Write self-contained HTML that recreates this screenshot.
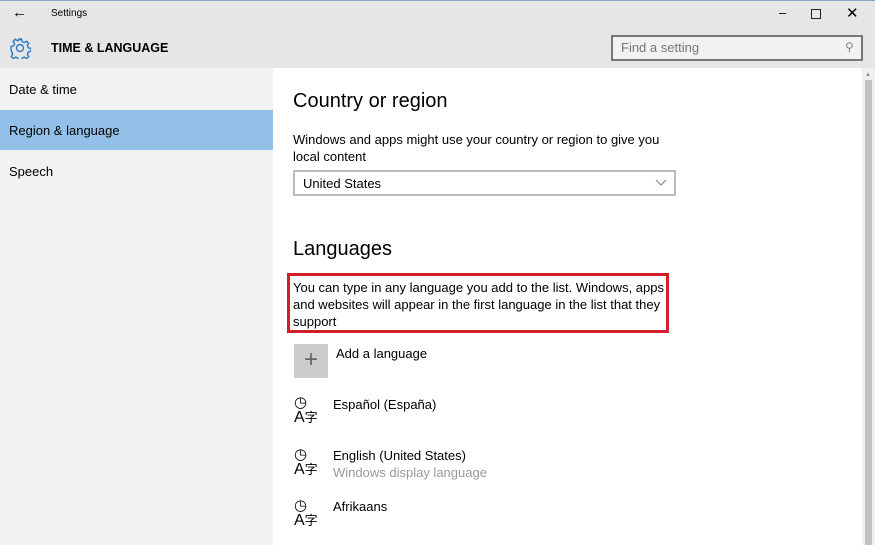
<!DOCTYPE html>
<html><head><style>
*{margin:0;padding:0;box-sizing:border-box}
body{width:875px;height:545px;overflow:hidden;font-family:"Liberation Sans",sans-serif;color:#000;background:#fff;position:relative}
.a{position:absolute;white-space:nowrap}
.t{font-size:13px;letter-spacing:0}
</style></head><body>
<div class="a" style="left:0;top:0;width:875px;height:68px;background:#e6e6e6"></div>
<div class="a" style="left:0;top:0;width:875px;height:1px;background:#8aa6c8"></div>
<div class="a" style="left:12px;top:4px;font-size:15px">&#8592;</div>
<div class="a" style="left:51px;top:8px;font-size:10px">Settings</div>
<div class="a" style="left:779px;top:5px;font-size:13px">&#8211;</div>
<div class="a" style="left:811px;top:9px;width:10px;height:10px;border:1.5px solid #222"></div>
<div class="a" style="left:846px;top:4px;font-size:15px">&#10005;</div>
<svg class="a" style="left:9px;top:37px" width="22" height="22" viewBox="0 0 22 22"><g fill="none" stroke="#2b79c2" stroke-width="1.4"><circle cx="11" cy="11" r="3.5"/><path d="M9.5 2h3l.6 2.6 2.2 1 2.3-1.4 2.1 2.1-1.4 2.3 1 2.2 2.6.6v3l-2.6.6-1 2.2 1.4 2.3-2.1 2.1-2.3-1.4-2.2 1-.6 2.6h-3l-.6-2.6-2.2-1-2.3 1.4-2.1-2.1 1.4-2.3-1-2.2L2 12.5v-3l2.6-.6 1-2.2-1.4-2.3 2.1-2.1 2.3 1.4 2.2-1z"/></g></svg>
<div class="a" style="left:51px;top:41px;font-size:12.5px;font-weight:bold">TIME &amp; LANGUAGE</div>
<div class="a" style="left:611px;top:35px;width:252px;height:26px;border:2px solid #777;background:#f2f2f2"></div>
<div class="a t" style="left:621px;top:40px;color:#777">Find a setting</div>
<div class="a" style="left:845px;top:40px;font-size:12px;color:#888">&#9906;</div>
<div class="a" style="left:0;top:68px;width:273px;height:477px;background:#f2f2f2"></div>
<div class="a" style="left:0;top:110px;width:273px;height:40px;background:#93c0e8"></div>
<div class="a t" style="left:9px;top:82px">Date &amp; time</div>
<div class="a t" style="left:9px;top:123px">Region &amp; language</div>
<div class="a t" style="left:9px;top:164px">Speech</div>
<div class="a" style="left:862px;top:68px;width:13px;height:477px;background:#f0f0f0"></div>
<div class="a" style="left:865px;top:72px;font-size:6px;color:#888">&#9650;</div>
<div class="a" style="left:865px;top:80px;width:7px;height:465px;background:#c2c2c2"></div>
<div class="a" style="left:293px;top:90px;font-size:20px">Country or region</div>
<div class="a t" style="left:293px;top:131px;line-height:17px">Windows and apps might use your country or region to give you<br>local content</div>
<div class="a" style="left:293px;top:170px;width:383px;height:26px;border:2px solid #bbb"></div>
<div class="a t" style="left:303px;top:176px">United States</div>
<svg class="a" style="left:655px;top:179px" width="12" height="8"><path d="M1 1l5 5 5-5" fill="none" stroke="#888" stroke-width="1.2"/></svg>
<div class="a" style="left:293px;top:238px;font-size:20px">Languages</div>
<div class="a" style="left:287px;top:273px;width:382px;height:60px;border:3px solid #d21f2c"></div>
<div class="a t" style="left:293px;top:279px;line-height:17px">You can type in any language you add to the list. Windows, apps<br>and websites will appear in the first language in the list that they<br>support</div>
<div class="a" style="left:294px;top:344px;width:34px;height:34px;background:#ccc;text-align:center;font-size:24px;line-height:32px;color:#666;font-weight:300">+</div>
<div class="a t" style="left:336px;top:346px">Add a language</div>
<div class="a" style="left:294px;top:396px;font-size:15px;line-height:14px">&#9719;<br><span style="font-size:16px">A</span><span style="font-family:'Noto Sans CJK SC',sans-serif;font-size:13px">字</span></div>
<div class="a t" style="left:333px;top:397px">Español (España)</div>
<div class="a" style="left:294px;top:448px;font-size:15px;line-height:14px">&#9719;<br><span style="font-size:16px">A</span><span style="font-family:'Noto Sans CJK SC',sans-serif;font-size:13px">字</span></div>
<div class="a t" style="left:333px;top:448px">English (United States)</div>
<div class="a t" style="left:333px;top:465px;color:#999">Windows display language</div>
<div class="a" style="left:294px;top:499px;font-size:15px;line-height:14px">&#9719;<br><span style="font-size:16px">A</span><span style="font-family:'Noto Sans CJK SC',sans-serif;font-size:13px">字</span></div>
<div class="a t" style="left:333px;top:499px">Afrikaans</div>
</body></html>
